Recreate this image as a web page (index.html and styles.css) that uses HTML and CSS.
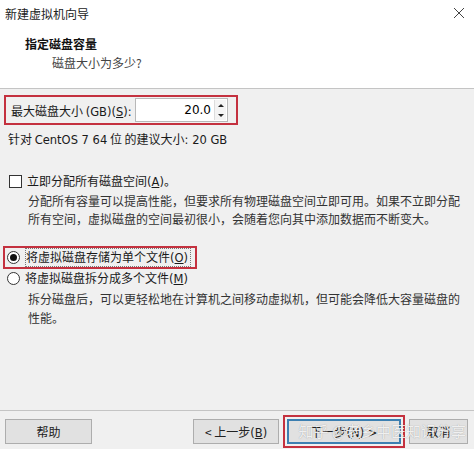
FILE: index.html
```html
<!DOCTYPE html>
<html lang="zh-CN">
<head>
  <meta charset="UTF-8">
  <title>新建虚拟机向导</title>
  <link rel="stylesheet" href="styles.css">
</head>
<body>
  <div class="dialog">
    <div class="titlebar">
      <span class="title">新建虚拟机向导</span>
      <svg class="close" width="12" height="12" viewBox="0 0 12 12">
        <path d="M1 1 L11 11 M11 1 L1 11" stroke="#444" stroke-width="1"/>
      </svg>
    </div>

    <div class="header">
      <div class="heading">指定磁盘容量</div>
      <div class="subheading">磁盘大小为多少?</div>
    </div>

    <div class="content">
      <div class="mark size-row">
        <span class="label">最大磁盘大小 <span class="lat">(GB)(<u>S</u>):</span></span>
        <div class="spin">
          <span class="value">20.0</span>
          <div class="arrows">
            <span class="up"></span>
            <span class="down"></span>
          </div>
        </div>
      </div>

      <div class="hint">针对 <span class="lat">CentOS 7 64</span> 位 的建议大小<span class="lat">: 20 GB</span></div>

      <label class="check-row">
        <span class="checkbox"></span>
        <span>立即分配所有磁盘空间<span class="lat">(<u>A</u>)</span>。</span>
      </label>
      <p class="desc">分配所有容量可以提高性能，但要求所有物理磁盘空间立即可用。如果不立即分配所有空间，虚拟磁盘的空间最初很小，会随着您向其中添加数据而不断变大。</p>

      <label class="mark radio-row selected">
        <span class="radio"><span class="dot"></span></span>
        <span class="focus">将虚拟磁盘存储为单个文件<span class="lat">(<u>O</u>)</span></span>
      </label>
      <label class="radio-row">
        <span class="radio"></span>
        <span>将虚拟磁盘拆分成多个文件<span class="lat">(<u>M</u>)</span></span>
      </label>
      <p class="desc split">拆分磁盘后，可以更轻松地在计算机之间移动虚拟机，但可能会降低大容量磁盘的性能。</p>
    </div>

    <div class="footer">
      <button class="btn help">帮助</button>
      <div class="nav">
        <button class="btn back">&lt; 上一步<span class="lat">(<u>B</u>)</span></button>
        <span class="mark next-mark"><button class="btn next">下一步<span class="lat">(<u>N</u>) &gt;</span></button></span>
        <button class="btn cancel">取消</button>
      </div>
      <div class="watermark">知乎 @老乡中医知识分享</div>
    </div>
  </div>
</body>
</html>
```

FILE: styles.css
```css
* {
  box-sizing: border-box;
}

body {
  margin: 0;
  background: #f0f0f0;
  font-family: "Noto Sans CJK SC", "DejaVu Sans", sans-serif;
  font-size: 12px;
  color: #1a1a1a;
}

.dialog {
  width: 474px;
  height: 449px;
  display: flex;
  flex-direction: column;
  background: #f0f0f0;
}

.lat {
  font-family: "DejaVu Sans", "Noto Sans CJK SC", sans-serif;
  font-size: 11.5px;
}

.titlebar {
  height: 28px;
  background: #fff;
  display: flex;
  align-items: center;
  justify-content: space-between;
  padding: 0 9px 2px 5px;
}

.title {
  font-size: 12px;
  color: #222;
}

.header {
  height: 61px;
  background: #fff;
  border-bottom: 1px solid #c4c4c4;
  padding: 8px 0 0 25px;
}

.heading {
  font-weight: bold;
  line-height: 16px;
  color: #111;
}

.subheading {
  margin: 3px 0 0 27px;
  line-height: 16px;
  color: #444;
}

.content {
  flex: 1;
  padding: 6px 0 0 4px;
}

.mark {
  border: 2px solid #c4313f;
}

.size-row {
  width: 234px;
  height: 30px;
  display: flex;
  align-items: center;
  justify-content: space-between;
  padding: 0 8px 0 5px;
}

.spin {
  width: 93px;
  height: 24px;
  background: #fff;
  border: 1px solid #b8b8b8;
  display: flex;
  align-items: center;
  justify-content: flex-end;
  padding-right: 1px;
}

.value {
  font-family: "DejaVu Sans", sans-serif;
  font-size: 12px;
  margin-right: 3px;
  color: #000;
}

.arrows {
  width: 12px;
  height: 20px;
  display: flex;
  flex-direction: column;
  justify-content: space-around;
  align-items: center;
  background: #f4f4f4;
  border-left: 1px solid #ddd;
}

.up, .down {
  width: 0;
  height: 0;
  border-left: 3px solid transparent;
  border-right: 3px solid transparent;
}

.up {
  border-bottom: 3px solid #222;
}

.down {
  border-top: 3px solid #222;
}

.hint {
  margin: 5px 0 0 4px;
  line-height: 18px;
}

.check-row, .radio-row {
  display: flex;
  align-items: center;
  gap: 5px;
  line-height: 18px;
}

.check-row {
  margin: 23px 0 0 5px;
}

.checkbox {
  width: 13px;
  height: 13px;
  background: #fff;
  border: 1px solid #333;
}

.desc {
  margin: 1px 10px 0 24px;
  line-height: 18px;
  color: #333;
}

.radio-row {
  padding-left: 3px;
}

.selected {
  width: 194px;
  height: 23px;
  margin: 18px 0 0 -1px;
  padding-left: 2px;
}

.focus {
  border: 1px dotted #777;
  line-height: 15px;
  padding-right: 2px;
}

.radio {
  width: 13px;
  height: 13px;
  border-radius: 50%;
  border: 1px solid #333;
  background: #fff;
  display: flex;
  align-items: center;
  justify-content: center;
}

.dot {
  width: 7px;
  height: 7px;
  border-radius: 50%;
  background: #111;
}

.split {
  margin-top: 1px;
  line-height: 19px;
}

.footer {
  height: 39px;
  border-top: 1px solid #c4c4c4;
  display: flex;
  align-items: center;
  justify-content: space-between;
  padding: 2px 6px 0 5px;
  position: relative;
}

.nav {
  display: flex;
  align-items: center;
}

.btn {
  height: 25px;
  background: #e1e1e1;
  border: 1px solid #adadad;
  font-family: "Noto Sans CJK SC", sans-serif;
  font-size: 12px;
  color: #222;
  padding: 0;
}

.help {
  width: 87px;
}

.back {
  width: 86px;
  margin-right: 4px;
}

.next-mark {
  display: flex;
  padding: 2px;
  margin-right: 4px;
}

.next {
  width: 114px;
  border: 2px solid #3c7fb1;
}

.cancel {
  width: 59px;
}

.watermark {
  position: absolute;
  right: 8px;
  top: 9px;
  font-size: 15px;
  color: rgba(255, 255, 255, 0.85);
  text-shadow: 0 0 1px rgba(0, 0, 0, 0.35);
  pointer-events: none;
}
```
